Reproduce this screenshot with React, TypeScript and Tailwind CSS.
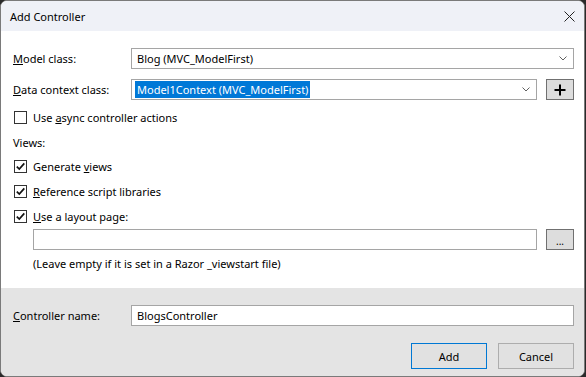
import type { ReactNode } from 'react'

const font = { fontFamily: '"Noto Sans", "Segoe UI", sans-serif' }

const Chevron = () => (
  <svg width="8" height="5" viewBox="0 0 8 5" className="shrink-0">
    <path d="M0.5 0.5 L4 4 L7.5 0.5" fill="none" stroke="#606060" strokeWidth="1" />
  </svg>
)

const Check = ({ checked }: { checked: boolean }) => (
  <span className="flex h-[13px] w-[13px] shrink-0 items-center justify-center border border-[#333333] bg-white">
    {checked && (
      <svg width="11" height="11" viewBox="0 0 11 11">
        <path d="M1.8 5.6 L4.3 8.1 L9.3 2.4" fill="none" stroke="#111111" strokeWidth="1.7" />
      </svg>
    )}
  </span>
)

const CheckRow = ({ checked, children }: { checked: boolean; children: ReactNode }) => (
  <div className="flex h-[16px] items-center gap-[6px] pl-[1px]">
    <Check checked={checked} />
    <span>{children}</span>
  </div>
)

const Select = ({ children }: { children: ReactNode }) => (
  <div className="flex h-[21px] min-w-0 flex-1 items-center border border-[#a5a5a5] bg-white pl-[3px] pr-[6px]">
    <div className="flex flex-1 items-center whitespace-nowrap leading-[17px]">{children}</div>
    <Chevron />
  </div>
)

const SmallButton = ({ children }: { children: ReactNode }) => (
  <button className="flex h-[21px] w-[28px] shrink-0 items-center justify-center border border-[#707070] bg-[#dddddd]">
    {children}
  </button>
)

export default function App() {
  return (
    <div className="h-[377px] w-[586px] bg-[#2a2a2a] text-[11px] leading-none text-black" style={font}>
      <div className="flex h-[377px] w-[585px] flex-col overflow-hidden rounded-[7px] border border-[#7a7a7a] bg-white">
        <div className="flex h-[30px] shrink-0 items-center justify-between bg-[#eff1f7] pl-[9px] pr-[9px]">
          <span>Add Controller</span>
          <svg width="11" height="11" viewBox="0 0 11 11">
            <path d="M0.5 0.5 L10.5 10.5 M10.5 0.5 L0.5 10.5" stroke="#222222" strokeWidth="1" />
          </svg>
        </div>

        <div className="flex flex-1 flex-col pl-[12px] pr-[10px] pt-[17px]">
          <div className="flex items-center">
            <span className="w-[118px] shrink-0">
              <u>M</u>odel class:
            </span>
            <Select>
              <span className="pl-[2px]">Blog (MVC_ModelFirst)</span>
            </Select>
          </div>

          <div className="mt-[10px] flex items-center">
            <span className="w-[118px] shrink-0">
              <u>D</u>ata context class:
            </span>
            <Select>
              <span className="inline-flex h-[17px] items-center bg-[#0078d7] px-[2px] text-white">
                Model1Context (MVC_ModelFirst)
              </span>
            </Select>
            <div className="ml-[9px]">
              <SmallButton>
                <svg width="12" height="12" viewBox="0 0 12 12">
                  <path d="M6 0.5 V11.5 M0.5 6 H11.5" stroke="#000000" strokeWidth="2" />
                </svg>
              </SmallButton>
            </div>
          </div>

          <div className="mt-[9px]">
            <CheckRow checked={false}>
              Use <u>a</u>sync controller actions
            </CheckRow>
          </div>

          <div className="mt-[9px] flex h-[16px] items-center">Views:</div>

          <div className="mt-[8px]">
            <CheckRow checked>
              Generate <u>v</u>iews
            </CheckRow>
          </div>
          <div className="mt-[9px]">
            <CheckRow checked>
              <u>R</u>eference script libraries
            </CheckRow>
          </div>
          <div className="mt-[9px]">
            <CheckRow checked>
              <u>U</u>se a layout page:
            </CheckRow>
          </div>

          <div className="mt-[5px] flex items-center pl-[20px]">
            <div className="h-[21px] flex-1 border border-[#a5a5a5] bg-white" />
            <div className="ml-[9px]">
              <SmallButton>
                <span className="pt-[3px] text-[10px]">...</span>
              </SmallButton>
            </div>
          </div>

          <div className="mt-[5px] flex h-[16px] items-center pl-[20px]">
            (Leave empty if it is set in a Razor _viewstart file)
          </div>
        </div>

        <div className="flex h-[88px] shrink-0 flex-col bg-[#e4e4e4] pl-[12px] pr-[10px] pt-[17px]">
          <div className="flex items-center">
            <span className="w-[118px] shrink-0">
              <u>C</u>ontroller name:
            </span>
            <div className="flex h-[21px] flex-1 items-center border border-[#a5a5a5] bg-white pl-[5px]">
              BlogsController
            </div>
          </div>
          <div className="mt-[17px] flex justify-end gap-[11px]">
            <button className="h-[26px] w-[76px] border border-[#0078d4] bg-[#e1e1e1]">Add</button>
            <button className="h-[26px] w-[76px] border border-[#adadad] bg-[#e1e1e1]">Cancel</button>
          </div>
        </div>
      </div>
    </div>
  )
}
